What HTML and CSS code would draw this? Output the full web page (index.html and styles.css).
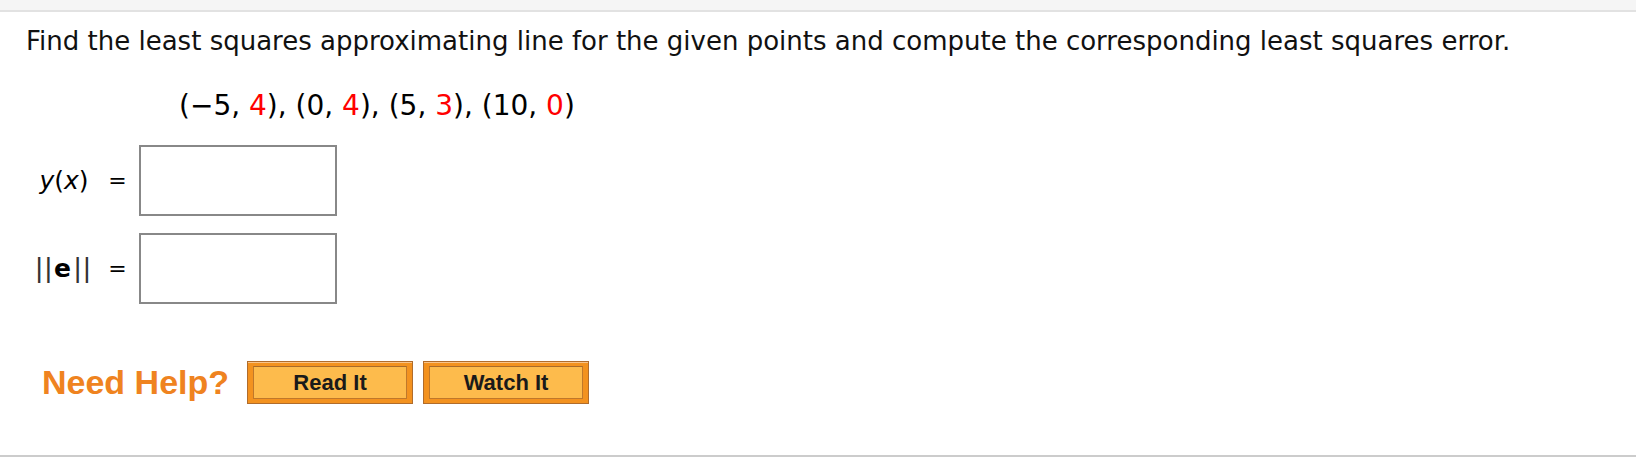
FILE: index.html
```html
<!DOCTYPE html>
<html lang="en">
<head>
<meta charset="utf-8">
<title>Least squares</title>
<link rel="stylesheet" href="styles.css">
</head>
<body>
<div class="topbar"></div>
<div class="question">
  <p class="prompt">Find the least squares approximating line for the given points and compute the corresponding least squares error.</p>
  <p class="points">(−5, <span class="red">4</span>), (0, <span class="red">4</span>), (5, <span class="red">3</span>), (10, <span class="red">0</span>)</p>
  <div class="answers">
    <div class="label"><span class="it">y</span>(<span class="it">x</span>)</div>
    <div class="eq">=</div>
    <div class="box"></div>
    <div class="label"><span class="bars">||</span><b class="e">e</b><span class="bars">||</span></div>
    <div class="eq">=</div>
    <div class="box"></div>
  </div>
  <div class="help">
    <span class="help-title">Need Help?</span>
    <span class="btn"><span class="btn-in">Read It</span></span>
    <span class="btn"><span class="btn-in">Watch It</span></span>
  </div>
</div>
<div class="bottomline"></div>
</body>
</html>
```
FILE: styles.css
```css
html, body {
  margin: 0;
  padding: 0;
  background: #ffffff;
}
body {
  font-family: "DejaVu Sans", Verdana, sans-serif;
  color: #000;
}
.topbar {
  height: 10px;
  background: #f5f5f5;
  border-bottom: 2px solid #e2e2e2;
}
.question {
  padding-left: 26px;
}
.prompt {
  margin: 15px 0 0 0;
  font-size: 26px;
  line-height: 28px;
  color: #111;
}
.points {
  margin: 35px 0 0 153px;
  font-size: 28px;
  line-height: 32px;
}
.red {
  color: #ff0000;
}
.answers {
  margin-top: 23px;
  display: grid;
  grid-template-columns: 64px 43px 198px;
  row-gap: 17px;
  align-items: center;
  margin-left: 6px;
}
.label {
  font-size: 25px;
  text-align: center;
  line-height: 30px;
  white-space: nowrap;
}
.it {
  font-style: italic;
}
.bars {
  font-family: "Liberation Sans", Arial, sans-serif;
  font-size: 28px;
  color: #333;
  letter-spacing: 2px;
}
.e {
  font-weight: bold;
  margin-right: 3px;
}
.eq {
  font-size: 22px;
  text-align: center;
}
.box {
  box-sizing: border-box;
  height: 71px;
  border: 2px solid #888888;
  background: #fff;
}
.help {
  margin-top: 57px;
  display: flex;
  align-items: center;
  margin-left: 16px;
  height: 43px;
}
.help-title {
  font-family: "Liberation Sans", Arial, sans-serif;
  font-weight: bold;
  font-size: 34px;
  color: #ef8320;
  margin-right: 18px;
}
.btn {
  box-sizing: border-box;
  width: 166px;
  height: 43px;
  border: 1px solid #b06c2c;
  background: #f3921f;
  box-shadow: inset 0 1px 0 #f9c48a;
  padding: 4px 5px;
  margin-right: 10px;
  display: flex;
}
.btn-in {
  flex: 1;
  border: 1px solid #c0782a;
  border-top-color: #a86a2a;
  background: #fdbb4c;
  display: flex;
  align-items: center;
  justify-content: center;
  font-family: "Liberation Sans", Arial, sans-serif;
  font-weight: bold;
  font-size: 22px;
  color: #1a1a1a;
}
.bottomline {
  margin-top: 51px;
  height: 2px;
  background: #cccccc;
}
```
